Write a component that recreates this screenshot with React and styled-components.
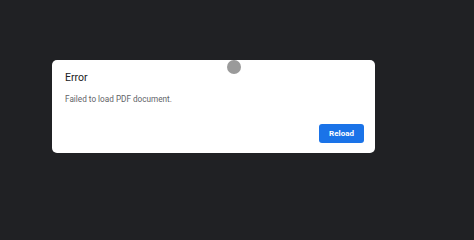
import styled, { createGlobalStyle } from "styled-components";

const GlobalStyle = createGlobalStyle`
  html, body {
    margin: 0;
    padding: 0;
    background: #202124;
  }
`;

const Page = styled.div`
  position: relative;
  width: 474px;
  height: 222px;
  background: #202124;
  padding: 60px 0 0 52px;
  box-sizing: border-box;
  font-family: Roboto, "Liberation Sans", sans-serif;
`;

const Dialog = styled.div`
  width: 323px;
  height: 93px;
  box-sizing: border-box;
  background: #ffffff;
  border-radius: 5px;
  padding: 11px 11px 10px 13px;
  display: flex;
  flex-direction: column;
`;

const Title = styled.div`
  font-size: 10.5px;
  line-height: 13px;
  color: #202124;
`;

const Message = styled.div`
  margin-top: 10px;
  font-size: 8.2px;
  line-height: 11px;
  color: #5f6368;
`;

const Actions = styled.div`
  margin-top: auto;
  display: flex;
  justify-content: flex-end;
`;

const Button = styled.button`
  width: 45px;
  height: 19px;
  border: none;
  border-radius: 3px;
  background: #1a73e8;
  color: #ffffff;
  font-family: Roboto, "Liberation Sans", sans-serif;
  font-weight: 700;
  font-size: 8px;
  padding: 0;
`;

const Cursor = styled.div`
  position: absolute;
  left: 227px;
  top: 60px;
  width: 14px;
  height: 14px;
  border-radius: 50%;
  background: #9a9a9a;
`;

const App = () => {
  return (
    <Page>
      <GlobalStyle />
      <Dialog>
        <Title>Error</Title>
        <Message>Failed to load PDF document.</Message>
        <Actions>
          <Button>Reload</Button>
        </Actions>
      </Dialog>
      <Cursor />
    </Page>
  );
};

export default App;
